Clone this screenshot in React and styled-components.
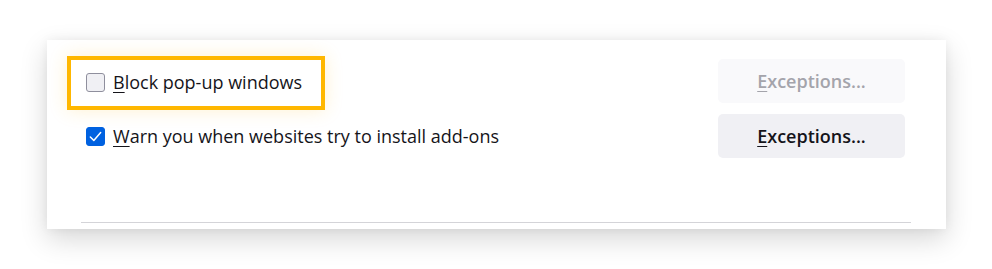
import React from "react";
import styled, { createGlobalStyle } from "styled-components";

const Global = createGlobalStyle`
  html, body { margin: 0; padding: 0; background: #ffffff; }
  body { font-family: "Open Sans", "Noto Sans", sans-serif; color: #15141a; }
`;

const Page = styled.div`
  width: 992px;
  height: 269px;
  box-sizing: border-box;
  padding: 40px 46px 0 47px;
  background: #ffffff;
  overflow: hidden;
`;

const Card = styled.section`
  box-sizing: border-box;
  height: 189px;
  background: #ffffff;
  box-shadow: 0 10px 26px rgba(0, 0, 0, 0.16), 0 0 10px rgba(0, 0, 0, 0.05);
  padding: 19px 35px 6px 34px;
  display: flex;
  flex-direction: column;
`;

const Rows = styled.div`
  display: flex;
  flex-direction: column;
  gap: 11px;
  padding: 0 6px 0 5px;
  flex: 1;
`;

const Row = styled.div`
  display: flex;
  align-items: center;
  justify-content: space-between;
  height: 44px;
`;

const Highlight = styled.div`
  margin: 4px 0 0 -19px;
  border: 4px solid #ffb700;
  padding: 10px 19px 12px 15px;
  box-shadow: 0 0 18px rgba(255, 190, 40, 0.22);
  background: #ffffff;
  display: flex;
  align-items: center;
`;

const Label = styled.label`
  display: flex;
  align-items: center;
  gap: 8px;
  font-size: 18px;
  line-height: 24px;
  color: #15141a;
  white-space: nowrap;
`;

const Box = styled.span`
  box-sizing: border-box;
  width: 19px;
  height: 19px;
  border-radius: 3px;
  flex: none;
  display: flex;
  align-items: center;
  justify-content: center;
  background: ${(p) => (p.$checked ? "#0061e0" : "#f0f0f4")};
  border: 1px solid ${(p) => (p.$checked ? "#0061e0" : "#8f8f9d")};
`;

const Key = styled.span`
  text-decoration: underline;
  text-underline-offset: 3px;
  text-decoration-thickness: 1px;
`;

const Button = styled.button`
  width: 187px;
  height: 44px;
  border: none;
  border-radius: 5px;
  font-family: "Open Sans", "Noto Sans", sans-serif;
  font-size: 18px;
  font-weight: 600;
  background: ${(p) => (p.disabled ? "#f9f9fb" : "#f0f0f4")};
  color: ${(p) => (p.disabled ? "#a4a4ab" : "#15141a")};
  padding: 0;
`;

const Divider = styled.hr`
  margin: 0;
  border: none;
  height: 1px;
  background: #d4d4d8;
`;

function Check() {
  return (
    <svg width="15" height="15" viewBox="0 0 16 16" fill="none">
      <path d="M2.5 8.5 L6.2 12.2 L13.5 3.8" stroke="#ffffff" strokeWidth="1.6" strokeLinecap="round" strokeLinejoin="round" />
    </svg>
  );
}

export default function App() {
  return (
    <>
      <Global />
      <Page>
        <Card>
          <Rows>
            <Row>
              <Highlight>
                <Label>
                  <Box />
                  <span><Key>B</Key>lock pop-up windows</span>
                </Label>
              </Highlight>
              <Button disabled><Key>E</Key>xceptions...</Button>
            </Row>
            <Row>
              <Label>
                <Box $checked><Check /></Box>
                <span><Key>W</Key>arn you when websites try to install add-ons</span>
              </Label>
              <Button><Key>E</Key>xceptions...</Button>
            </Row>
          </Rows>
          <Divider />
        </Card>
      </Page>
    </>
  );
}
